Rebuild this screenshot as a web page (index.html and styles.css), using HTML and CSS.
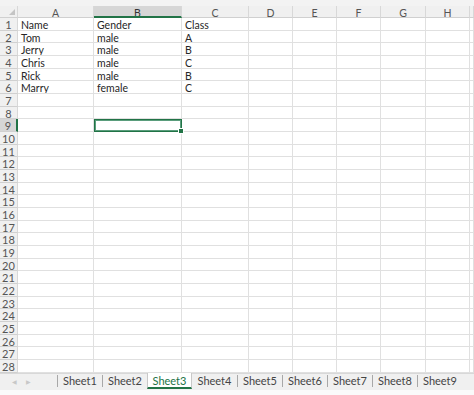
FILE: index.html
```html
<!DOCTYPE html><html lang="en">
<head>
  <meta charset="UTF-8">
  <meta name="viewport" content="width=device-width, initial-scale=1.0">
  <title>Book1</title>
  <link rel="stylesheet" href="styles.css">
</head>
<body>
<div class="topband"></div>
<div id="grid" class="grid"></div>
<div class="tabbar">
  <div class="nav">
    <span class="arrow">&#9664;</span>
    <span class="arrow">&#9654;</span>
  </div>
  <div id="tabs" class="tabs"></div>
</div>
<div class="bottomband"></div>
<script>
// Sheet data
const cols = ['A', 'B', 'C', 'D', 'E', 'F', 'G', 'H', ''];
const data = [
  ['Name', 'Gender', 'Class'],
  ['Tom', 'male', 'A'],
  ['Jerry', 'male', 'B'],
  ['Chris', 'male', 'C'],
  ['Rick', 'male', 'B'],
  ['Marry', 'female', 'C']
];
const selCol = 1;
const selRow = 9;

function cell(cls, text) {
  const d = document.createElement('div');
  d.className = cls;
  d.textContent = text || '';
  return d;
}

function buildGrid() {
  const grid = document.getElementById('grid');
  grid.appendChild(cell('corner'));
  cols.forEach((c, i) => {
    grid.appendChild(cell('colhead' + (i === selCol ? ' sel' : ''), c));
  });
  for (let r = 1; r <= 28; r++) {
    grid.appendChild(cell('rowhead' + (r === selRow ? ' sel' : ''), r));
    cols.forEach((c, i) => {
      const row = data[r - 1] || [];
      const d = cell('cell', row[i]);
      if (r === selRow && i === selCol) d.classList.add('active');
      grid.appendChild(d);
    });
  }
}

function buildTabs() {
  const tabs = document.getElementById('tabs');
  for (let i = 1; i <= 9; i++) {
    tabs.appendChild(cell('tab' + (i === 3 ? ' current' : ''), 'Sheet' + i));
  }
}

buildGrid();
buildTabs();
</script>
</body>
</html>
```

FILE: styles.css
```css
* { box-sizing: border-box; }
body {
  margin: 0;
  width: 474px;
  height: 395px;
  overflow: hidden;
  background: #fff;
  font-family: Lato, 'Open Sans', sans-serif;
  font-size: 10.5px;
  color: #262626;
}
.topband {
  height: 6px;
  background: #f3f3f3;
}
.grid {
  display: grid;
  grid-template-columns: 18px 76px 88px 67px 44px 44px 44px 45px 44px 1fr;
  grid-template-rows: 12px repeat(28, 12.68px);
}
.corner,
.colhead,
.rowhead {
  background: #f0f0f0;
  color: #555;
  border-right: 1px solid #d8d8d8;
  border-bottom: 1px solid #d0d0d0;
  white-space: nowrap;
  overflow: hidden;
}
.corner {
  position: relative;
}
.corner::after {
  content: '';
  position: absolute;
  right: 2px;
  bottom: 2px;
  border-left: 6px solid transparent;
  border-bottom: 6px solid #c4c4c4;
}
.colhead {
  text-align: center;
  padding-top: 1px;
  line-height: 12px;
}
.colhead.sel {
  background: #d6d6d6;
  border-bottom: 2px solid #217346;
  color: #333;
}
.rowhead {
  text-align: center;
  font-size: 11px;
  padding-top: 1px;
  line-height: 11px;
  overflow: visible;
}
.rowhead.sel {
  background: #d6d6d6;
  border-right: 2px solid #217346;
}
.cell {
  border-right: 1px solid #e0e0e0;
  border-bottom: 1px solid #e0e0e0;
  padding: 1px 0 0 3px;
  line-height: 13px;
  white-space: nowrap;
  overflow: hidden;
}
.cell.active {
  border: 1px solid #217346;
  box-shadow: inset 0 0 0 1px #5a9d7c;
  position: relative;
  overflow: visible;
}
.cell.active::after {
  content: '';
  position: absolute;
  right: -3px;
  bottom: -3px;
  width: 4px;
  height: 4px;
  background: #217346;
  border: 1px solid #fff;
}
.tabbar {
  display: flex;
  height: 17px;
  background: #f0f0f0;
  border-top: 1px solid #d8d8d8;
}
.nav {
  width: 57px;
  display: flex;
  gap: 9px;
  padding-left: 12px;
  align-items: center;
  color: #c8c8c8;
  font-size: 6px;
}
.tabs {
  display: flex;
  align-items: stretch;
}
.tab {
  width: 45px;
  text-align: center;
  font-size: 11px;
  color: #444;
  border-left: 1px solid #a8a8a8;
  margin: 1px 0 3px;
  line-height: 12px;
}
.tab.current {
  margin: -1px 0 1px;
  background: #fff;
  color: #217346;
  border-left: 1px solid #c8c8c8;
  border-right: 1px solid #c8c8c8;
  border-bottom: 2px solid #217346;
  line-height: 15px;
}
.tab.current + .tab {
  border-left: none;
}
.bottomband {
  height: 5px;
  background: #fafafa;
}
```
